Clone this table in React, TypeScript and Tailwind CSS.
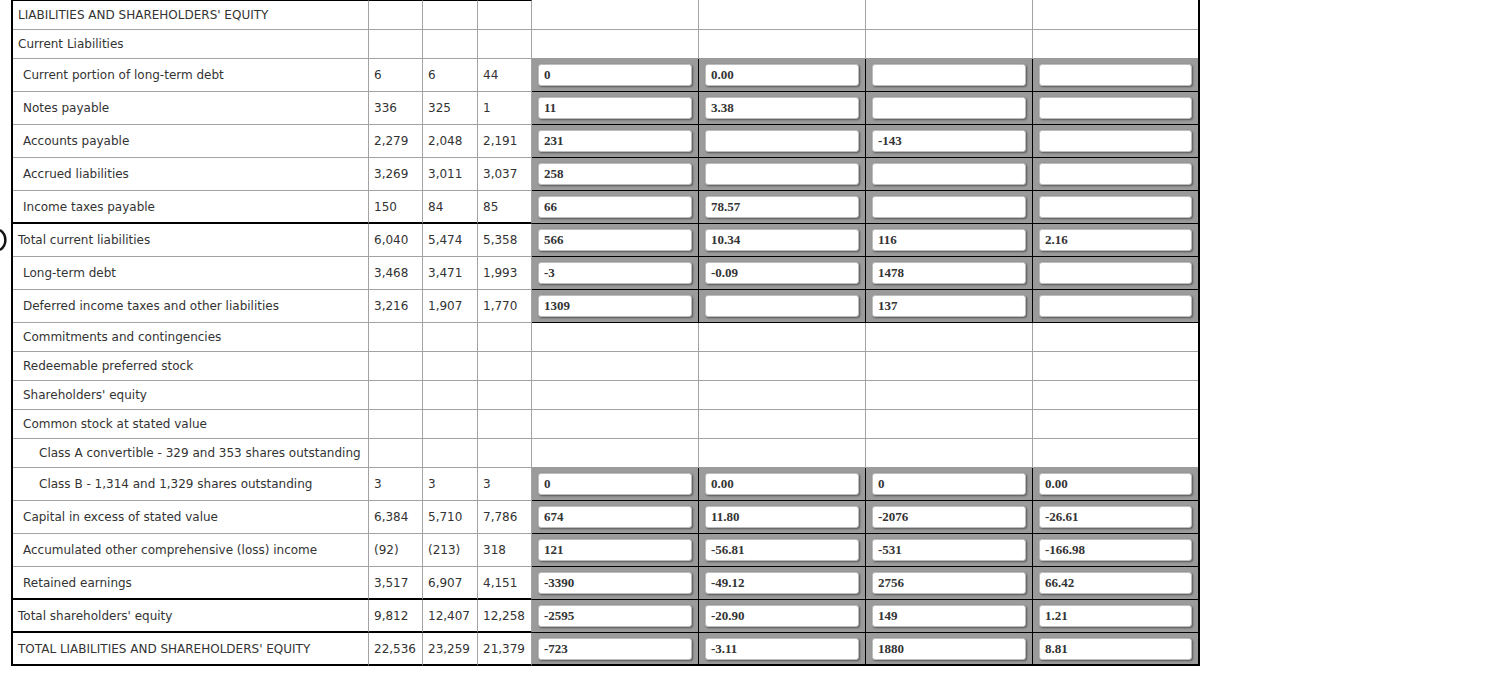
import React from "react";

type Kind = "total" | "normal" | "sub";
type Row = {
  label: string;
  kind: Kind;
  nums?: [string, string, string];
  inputs?: [string, string, string, string];
  blackBelow?: boolean;
};

const rows: Row[] = [
  { label: "LIABILITIES AND SHAREHOLDERS' EQUITY", kind: "total" },
  { label: "Current Liabilities", kind: "total" },
  { label: "Current portion of long-term debt", kind: "normal", nums: ["6", "6", "44"], inputs: ["0", "0.00", "", ""] },
  { label: "Notes payable", kind: "normal", nums: ["336", "325", "1"], inputs: ["11", "3.38", "", ""] },
  { label: "Accounts payable", kind: "normal", nums: ["2,279", "2,048", "2,191"], inputs: ["231", "", "-143", ""] },
  { label: "Accrued liabilities", kind: "normal", nums: ["3,269", "3,011", "3,037"], inputs: ["258", "", "", ""] },
  { label: "Income taxes payable", kind: "normal", nums: ["150", "84", "85"], inputs: ["66", "78.57", "", ""], blackBelow: true },
  { label: "Total current liabilities", kind: "total", nums: ["6,040", "5,474", "5,358"], inputs: ["566", "10.34", "116", "2.16"] },
  { label: "Long-term debt", kind: "normal", nums: ["3,468", "3,471", "1,993"], inputs: ["-3", "-0.09", "1478", ""] },
  { label: "Deferred income taxes and other liabilities", kind: "normal", nums: ["3,216", "1,907", "1,770"], inputs: ["1309", "", "137", ""] },
  { label: "Commitments and contingencies", kind: "normal" },
  { label: "Redeemable preferred stock", kind: "normal" },
  { label: "Shareholders' equity", kind: "normal" },
  { label: "Common stock at stated value", kind: "normal" },
  { label: "Class A convertible - 329 and 353 shares outstanding", kind: "sub" },
  { label: "Class B - 1,314 and 1,329 shares outstanding", kind: "sub", nums: ["3", "3", "3"], inputs: ["0", "0.00", "0", "0.00"] },
  { label: "Capital in excess of stated value", kind: "normal", nums: ["6,384", "5,710", "7,786"], inputs: ["674", "11.80", "-2076", "-26.61"] },
  { label: "Accumulated other comprehensive (loss) income", kind: "normal", nums: ["(92)", "(213)", "318"], inputs: ["121", "-56.81", "-531", "-166.98"] },
  { label: "Retained earnings", kind: "normal", nums: ["3,517", "6,907", "4,151"], inputs: ["-3390", "-49.12", "2756", "66.42"], blackBelow: true },
  { label: "Total shareholders' equity", kind: "total", nums: ["9,812", "12,407", "12,258"], inputs: ["-2595", "-20.90", "149", "1.21"], blackBelow: true },
  { label: "TOTAL LIABILITIES AND SHAREHOLDERS' EQUITY", kind: "total", nums: ["22,536", "23,259", "21,379"], inputs: ["-723", "-3.11", "1880", "8.81"] },
];

const numW = ["w-[54px]", "w-[55px]", "w-[54px]"];
const inW = ["w-[167px]", "w-[167px]", "w-[167px]", "w-[165px]"];

function TableRow({ row, idx }: { row: Row; idx: number }) {
  const isFirst = idx === 0;
  const isLast = idx === rows.length - 1;
  const h = row.inputs ? "h-[33px]" : isFirst ? "h-[30px]" : "h-[29px]";
  const leftBottom = isLast
    ? "border-b-2 border-b-black"
    : row.blackBelow
    ? "border-b-2 border-b-black"
    : "border-b border-b-[#a3a3a3]";
  const top = isFirst ? "border-t border-t-black" : "";
  const pad =
    row.kind === "total" ? "pl-[5px]" : row.kind === "sub" ? "pl-[26px]" : "pl-[10px]";
  return (
    <div className={`flex ${h}`}>
      <div
        className={`w-[356px] shrink-0 flex items-center ${pad} border-r border-r-[#a3a3a3] ${leftBottom} ${top} whitespace-nowrap`}
      >
        {row.label}
      </div>
      {[0, 1, 2].map((i) => (
        <div
          key={i}
          className={`${numW[i]} shrink-0 flex items-center pl-[5px] border-r border-r-[#a3a3a3] ${leftBottom} ${top} whitespace-nowrap`}
        >
          {row.nums ? row.nums[i] : ""}
        </div>
      ))}
      {[0, 1, 2, 3].map((i) => {
        const last = i === 3;
        if (row.inputs) {
          return (
            <div
              key={i}
              className={`${inW[i]} shrink-0 flex items-center px-[6px] bg-[#9b9b9b] ${last ? "" : "border-r border-r-black"} ${isLast ? "border-b-2" : "border-b"} border-b-black`}
            >
              <input
                readOnly
                value={row.inputs[i]}
                className="w-full h-[22px] bg-white rounded-[3px] border border-[#bdbdbd] shadow-[1px_1px_2px_rgba(0,0,0,0.45)] pl-[5px] text-[13px] font-bold text-[#333] outline-none"
                style={{ fontFamily: '"Liberation Serif", "Times New Roman", serif' }}
              />
            </div>
          );
        }
        return (
          <div
            key={i}
            className={`${inW[i]} shrink-0 ${last ? "" : "border-r border-r-[#a3a3a3]"} border-b ${
              rows[idx + 1] && rows[idx + 1].inputs ? "border-b-[#9b9b9b]" : "border-b-[#a3a3a3]"
            }`}
          />
        );
      })}
    </div>
  );
}

export default function App() {
  return (
    <div
      className="relative w-[1494px] h-[683px] bg-white text-[12px] text-[#333]"
      style={{ fontFamily: '"DejaVu Sans", Verdana, sans-serif' }}
    >
      <svg className="absolute left-0 top-[228px]" width="7" height="24" viewBox="0 0 7 24">
        <path d="M0 2 A 12 12 0 0 1 0 22" fill="none" stroke="#111" strokeWidth="2.5" />
      </svg>
      <div className="ml-[11px] w-[1189px] border-l-2 border-r-2 border-black">
        {rows.map((r, i) => (
          <TableRow key={i} row={r} idx={i} />
        ))}
      </div>
    </div>
  );
}
